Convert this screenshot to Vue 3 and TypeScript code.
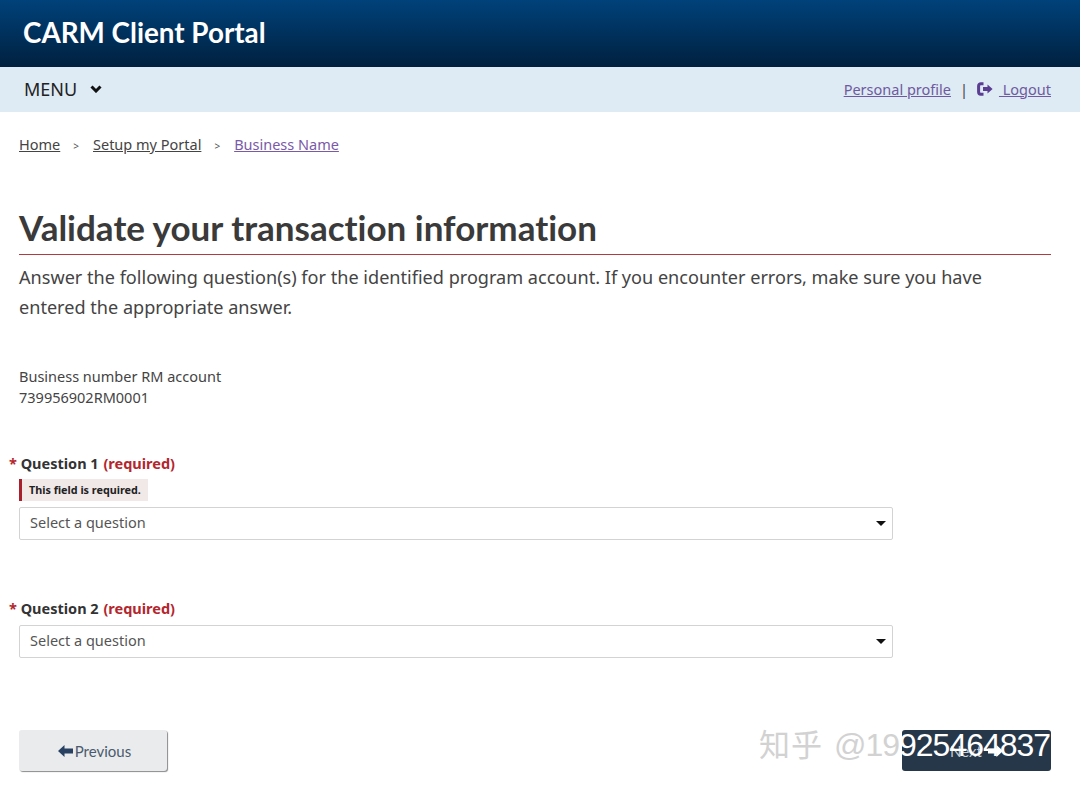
<script setup lang="ts">
interface Crumb {
  label: string
  current?: boolean
}

interface Question {
  id: number
  error?: string
}

const crumbs: Crumb[] = [
  { label: 'Home' },
  { label: 'Setup my Portal' },
  { label: 'Business Name', current: true }
]

const questions: Question[] = [
  { id: 1, error: 'This field is required.' },
  { id: 2 }
]
</script>

<template>
  <div class="page">
    <header class="banner">
      <span class="brand">CARM Client Portal</span>
    </header>

    <nav class="menu-bar">
      <button class="menu-btn" type="button">
        MENU
        <svg class="chev" viewBox="0 0 12 8" width="12" height="8">
          <path d="M1.5 1.5 6 6l4.5-4.5" fill="none" stroke="#111" stroke-width="3" />
        </svg>
      </button>
      <div class="user-links">
        <a href="#">Personal profile</a>
        <span class="sep">|</span>
        <svg class="logout-icon" viewBox="0 0 16 14" width="16" height="14">
          <path d="M6.5 1.7H3.8A2.2 2.2 0 0 0 1.6 3.9v6.2a2.2 2.2 0 0 0 2.2 2.2h2.7" fill="none" stroke="#5b3d92" stroke-width="3" />
          <path d="M6 5h4.5V2.4L15.6 7l-5.1 4.6V9H6z" fill="#5b3d92" />
        </svg>
        <a href="#" class="logout">&nbsp;Logout</a>
      </div>
    </nav>

    <main class="content">
      <ol class="crumbs">
        <li v-for="(c, i) in crumbs" :key="c.label">
          <span v-if="i > 0" class="gt">&gt;</span>
          <a href="#" :class="{ current: c.current }">{{ c.label }}</a>
        </li>
      </ol>

      <h1>Validate your transaction information</h1>
      <p class="intro">
        Answer the following question(s) for the identified program account. If you encounter errors, make sure you have
        entered the appropriate answer.
      </p>

      <div class="account">
        <div>Business number RM account</div>
        <div>739956902RM0001</div>
      </div>

      <section v-for="q in questions" :key="q.id" class="question" :class="`q-${q.id}`">
        <label class="q-label">
          <span class="star">*</span> Question {{ q.id }} <span class="req">(required)</span>
        </label>
        <div v-if="q.error" class="error">{{ q.error }}</div>
        <div class="select-wrap">
          <select class="select">
            <option>Select a question</option>
          </select>
          <svg class="caret" viewBox="0 0 10 5" width="10" height="5">
            <path d="M0 0h10L5 5z" fill="#111" />
          </svg>
        </div>
      </section>

      <div class="actions">
        <button class="btn prev" type="button">
          <svg viewBox="0 0 15 12" width="15" height="12">
            <path d="M0 6 6.5 0v3.6H15v4.8H6.5V12z" fill="#284162" />
          </svg>
          Previous
        </button>
        <button class="btn next" type="button">
          Next
          <svg viewBox="0 0 15 12" width="15" height="12">
            <path d="M15 6 8.5 0v3.6H0v4.8h8.5V12z" fill="#fff" />
          </svg>
        </button>
      </div>
    </main>

    <div class="watermark"><span class="wm-zh">知乎</span> <span class="wm-at">@19</span><span class="wm-num">925464837</span></div>
  </div>
</template>

<style scoped>
.page {
  position: relative;
  width: 1080px;
  height: 790px;
  overflow: hidden;
  background: #fff;
  color: #333;
  font-family: "Noto Sans", "Open Sans", sans-serif;
}

.banner {
  height: 67px;
  display: flex;
  align-items: center;
  padding: 0 0 3px 23px;
  box-sizing: border-box;
  background: linear-gradient(#00427a, #00203f);
}

.brand {
  font-family: Lato, sans-serif;
  font-weight: 700;
  font-size: 27.8px;
  color: #fff;
}

.menu-bar {
  height: 45px;
  display: flex;
  align-items: center;
  justify-content: space-between;
  padding: 0 29px 2px 24px;
  box-sizing: border-box;
  background: #deeaf4;
}

.menu-btn {
  display: flex;
  align-items: center;
  gap: 13px;
  padding: 0;
  border: 0;
  background: none;
  font: 400 18px "Noto Sans", sans-serif;
  color: #222;
}

.user-links {
  display: flex;
  align-items: center;
  font-size: 14.5px;
}

.user-links a {
  color: #6e5a9e;
}

.sep {
  margin: 0 9px;
  color: #444;
}

.logout-icon {
  margin-right: 6px;
}

.content {
  padding: 0 29px 0 19px;
}

.crumbs {
  display: flex;
  list-style: none;
  margin: 0;
  padding: 22px 0 0;
  font-size: 14.5px;
  line-height: 20px;
}

.crumbs a {
  color: #444;
}

.crumbs a.current {
  color: #7a5aa8;
}

.gt {
  margin: 0 14px 0 13px;
  font-size: 10px;
  color: #555;
}

h1 {
  margin: 50px 0 0;
  padding-bottom: 6px;
  border-bottom: 1px solid #af3c43;
  font-family: Lato, sans-serif;
  font-weight: 700;
  font-size: 35px;
  font-variant-ligatures: none;
  line-height: 42px;
  color: #3a3a3a;
}

.intro {
  margin: 7px 0 0;
  font-size: 18.1px;
  line-height: 30px;
  color: #444;
}

.account {
  margin-top: 44px;
  font-size: 14.5px;
  line-height: 21px;
  color: #444;
}

.question {
  margin-top: 45px;
}

.q-2 {
  margin-top: 58px;
}

.q-label {
  display: block;
  margin-left: -10px;
  font-weight: 700;
  font-size: 14.5px;
  line-height: 20px;
  color: #333;
}

.star,
.req {
  color: #b3262e;
}

.req {
  margin-left: 1px;
}

.error {
  width: fit-content;
  margin-top: 6px;
  padding: 0 7px;
  border-left: 3px solid #a8202c;
  background: #f1e9e8;
  font-weight: 700;
  font-size: 10.8px;
  line-height: 22px;
  color: #222;
}

.select-wrap {
  position: relative;
  width: 874px;
  margin-top: 6px;
}

.q-2 .select-wrap {
  margin-top: 7px;
}

.select {
  display: block;
  width: 100%;
  height: 33px;
  padding: 0 10px 3px;
  appearance: none;
  border: 1px solid #d3d3d3;
  border-radius: 2px;
  background: #fff;
  font: 400 14.5px "Noto Sans", sans-serif;
  color: #555;
}

.caret {
  position: absolute;
  top: 14px;
  right: 7px;
}

.actions {
  display: flex;
  justify-content: space-between;
  margin-top: 72px;
}

.btn {
  display: flex;
  align-items: center;
  justify-content: center;
  gap: 2px;
  height: 41px;
  border-radius: 3px;
  font: 400 15px Lato, sans-serif;
}

.prev {
  width: 148px;
  padding: 0 0 0 3px;
  border: 0;
  background: #e9ebec;
  box-shadow: 1px 1px 1px #8a8a8a;
  color: #4a5a6e;
}

.next {
  width: 149px;
  gap: 6px;
  border: 0;
  background: #26374a;
  color: #c9ced4;
}

.watermark {
  position: absolute;
  left: 759px;
  top: 721px;
  white-space: nowrap;
  font-family: "Liberation Sans", sans-serif;
  font-size: 32px;
  letter-spacing: -1px;
  line-height: 44px;
  color: #fff;
}

.wm-zh {
  margin-right: 3px;
  font-family: "Noto Sans CJK SC", sans-serif;
  font-size: 31px;
  letter-spacing: 1px;
  color: #d2d2d2;
}

.wm-at {
  color: #d2d2d2;
}
</style>

<style>
body {
  margin: 0;
}
</style>
